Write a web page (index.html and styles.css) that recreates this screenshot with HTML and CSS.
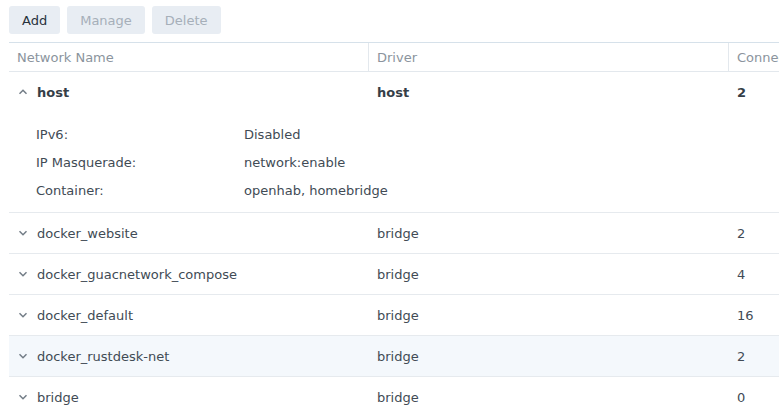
FILE: index.html
```html
<!DOCTYPE html>
<html lang="en">
<head>
  <meta charset="UTF-8" />
  <title>Network</title>
  <link rel="stylesheet" href="styles.css">
</head>
<body>
  <div class="toolbar">
    <button class="btn">Add</button>
    <button class="btn" disabled>Manage</button>
    <button class="btn" disabled>Delete</button>
  </div>

  <div class="table">
    <div class="head">
      <div class="th">Network Name</div>
      <div class="th">Driver</div>
      <div class="th">Connected Containers</div>
    </div>

    <!-- host (expanded) -->
    <div class="group open">
      <div class="row">
        <div class="td name">
          <svg class="chev" viewBox="0 0 10 10"><path d="M1.5 6.8 L5 3.3 L8.5 6.8" /></svg>
          host
        </div>
        <div class="td">host</div>
        <div class="td">2</div>
      </div>
      <div class="detail">
        <div class="dl">IPv6:</div><div class="dv">Disabled</div>
        <div class="dl">IP Masquerade:</div><div class="dv">network:enable</div>
        <div class="dl">Container:</div><div class="dv">openhab, homebridge</div>
      </div>
    </div>

    <div class="group">
      <div class="row">
        <div class="td name"><svg class="chev" viewBox="0 0 10 10"><path d="M1.5 3.3 L5 6.8 L8.5 3.3" /></svg>docker_website</div>
        <div class="td">bridge</div>
        <div class="td">2</div>
      </div>
    </div>

    <div class="group">
      <div class="row">
        <div class="td name"><svg class="chev" viewBox="0 0 10 10"><path d="M1.5 3.3 L5 6.8 L8.5 3.3" /></svg>docker_guacnetwork_compose</div>
        <div class="td">bridge</div>
        <div class="td">4</div>
      </div>
    </div>

    <div class="group">
      <div class="row">
        <div class="td name"><svg class="chev" viewBox="0 0 10 10"><path d="M1.5 3.3 L5 6.8 L8.5 3.3" /></svg>docker_default</div>
        <div class="td">bridge</div>
        <div class="td">16</div>
      </div>
    </div>

    <div class="group hover">
      <div class="row">
        <div class="td name"><svg class="chev" viewBox="0 0 10 10"><path d="M1.5 3.3 L5 6.8 L8.5 3.3" /></svg>docker_rustdesk-net</div>
        <div class="td">bridge</div>
        <div class="td">2</div>
      </div>
    </div>

    <div class="group">
      <div class="row">
        <div class="td name"><svg class="chev" viewBox="0 0 10 10"><path d="M1.5 3.3 L5 6.8 L8.5 3.3" /></svg>bridge</div>
        <div class="td">bridge</div>
        <div class="td">0</div>
      </div>
    </div>
  </div>
</body>
</html>
```

FILE: styles.css
```css
html, body {
  overflow: hidden;
}

body {
  margin: 0;
  font-family: "DejaVu Sans", Verdana, sans-serif;
  font-size: 13px;
  color: #414b55;
  background: #fff;
}

.toolbar {
  display: flex;
  gap: 7px;
  padding: 6px 9px 0;
}

.btn {
  font: inherit;
  height: 28px;
  padding: 0 13px;
  border: 0;
  border-radius: 3px;
  background-color: #e8edf3;
  color: #27313b;
  cursor: pointer;
}

.btn:disabled {
  color: #a6afb9;
  cursor: default;
}

.table {
  margin: 8px 0 0 9px;
  width: 880px;
  border-top: 1px solid #d6e1ea;
}

.head,
.row {
  display: grid;
  grid-template-columns: 360px 360px 160px;
}

.head {
  height: 28px;
  border-bottom: 1px solid #e3e8ed;
}

.th {
  display: flex;
  align-items: center;
  padding: 0 8px;
  color: #8b949d;
  border-right: 1px solid #e3e8ed;
  white-space: nowrap;
  overflow: hidden;
}

.th:last-child {
  border-right: 0;
}

.group {
  border-bottom: 1px solid #e6eaee;
}

.group.hover {
  background-color: #f4f8fc;
}

.row {
  height: 40px;
}

.td {
  display: flex;
  align-items: center;
  padding: 0 8px;
  white-space: nowrap;
}

.open .row .td {
  font-weight: bold;
  color: #353e47;
}

.chev {
  width: 10px;
  height: 10px;
  margin: 0 9px 0 1px;
  fill: none;
  stroke: #737d87;
  stroke-width: 1.5;
}

.detail {
  display: grid;
  grid-template-columns: 208px 1fr;
  grid-auto-rows: 28px;
  padding: 8px 0 8px 27px;
}

.dl,
.dv {
  display: flex;
  align-items: center;
}
```
